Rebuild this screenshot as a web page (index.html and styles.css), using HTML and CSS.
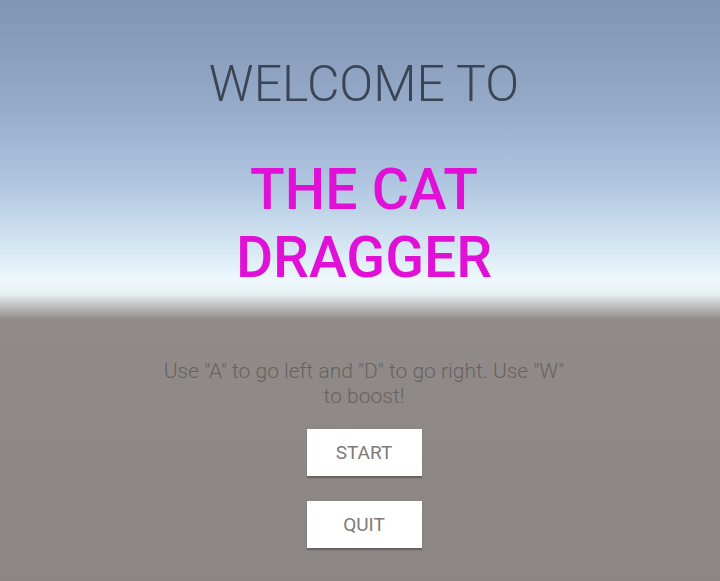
FILE: index.html
```html
<!DOCTYPE html>
<html lang="en">
<head>
  <meta charset="UTF-8">
  <meta name="viewport" content="width=device-width, initial-scale=1.0">
  <title>The Cat Dragger</title>
  <link rel="stylesheet" href="styles.css">
</head>
<body>
  <main class="menu">
    <h1 class="welcome">WELCOME TO</h1>
    <h2 class="game-title">THE CAT<br>DRAGGER</h2>
    <p class="controls">Use "A" to go left and "D" to go right. Use "W" to boost!</p>
    <div class="buttons">
      <button class="btn" id="start">START</button>
      <button class="btn" id="quit">QUIT</button>
    </div>
  </main>
</body>
</html>
```

FILE: styles.css
```css
html, body {
  height: 100%;
}

body {
  margin: 0;
  font-family: Roboto, 'Liberation Sans', sans-serif;
  /* skybox: blue sky fading to a bright haze, then the grey ground */
  background: linear-gradient(to bottom,
    #8095b4 0px,
    #94a9c7 100px,
    #aec4df 180px,
    #d4e6f3 245px,
    #eef8fc 280px,
    #e6eff2 294px,
    #b9b8b7 308px,
    #908b89 320px,
    #8b8683 100%);
  overflow: hidden;
}

.menu {
  display: flex;
  flex-direction: column;
  align-items: center;
  padding: 54px 0 0 8px;
}

.welcome {
  margin: 0;
  font-size: 50px;
  line-height: 60px;
  font-weight: 300;
  color: #3b4454;
}

.game-title {
  margin: 42px 0 0;
  font-size: 57px;
  line-height: 68px;
  font-weight: 500;
  color: #e010d6;
  text-align: center;
}

.controls {
  margin: 67px 0 0;
  max-width: 410px;
  font-size: 21px;
  line-height: 25px;
  font-weight: 300;
  color: #67625f;
  text-align: center;
}

.buttons {
  display: flex;
  flex-direction: column;
  gap: 25px;
  margin-top: 20px;
}

.btn {
  width: 115px;
  height: 47px;
  border: none;
  border-radius: 0;
  background: #fff;
  color: #7d7a79;
  font-family: Roboto, sans-serif;
  font-size: 19px;
  box-shadow: 0 2px 1px rgba(60, 55, 50, 0.45);
  cursor: pointer;
}
```
